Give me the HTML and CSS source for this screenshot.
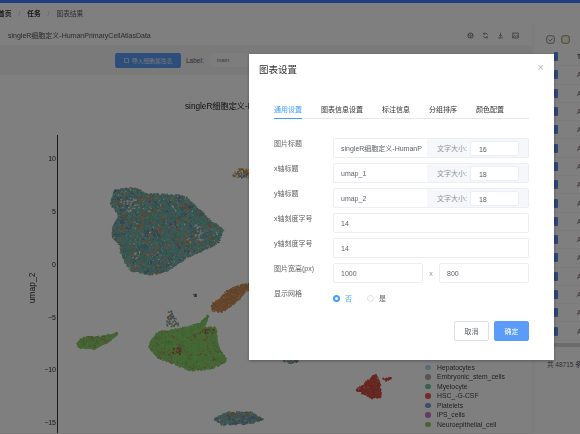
FILE: index.html
```html
<!DOCTYPE html>
<html lang="zh">
<head>
<meta charset="utf-8">
<title>图表结果</title>
<link rel="stylesheet" href="styles.css">
</head>
<body>
<div class="app">
  <div class="topbar"></div>
  <nav class="crumbs"><b>首页</b><i>/</i><b>任务</b><i>/</i><span>图表结果</span></nav>
  <div class="work">
    <section class="left">
      <header class="head">
        <span>singleR细胞定义-HumanPrimaryCellAtlasData</span>
        <div class="head-icons">
          <svg viewBox="0 0 10 10"><circle cx="5" cy="5" r="3.4" fill="none" stroke-width="2" stroke-dasharray="1.4 .7"/><circle cx="5" cy="5" r="1" fill="none"/></svg>
          <svg viewBox="0 0 10 10"><path d="M8 4A3.2 3.2 0 0 0 2.4 3M2 6a3.2 3.2 0 0 0 5.600 1M2.400 1v2h2M7.600 9V7h-2"/></svg>
          <svg viewBox="0 0 10 10"><path d="M5 1v5.500M3 4.500l2 2 2-2M1.500 8.500h7"/></svg>
          <svg viewBox="0 0 10 10"><path d="M1 1.500h8v7H1zM1 7l2.500-2 2 1.500L7 5l2 1.500"/></svg>
        </div>
      </header>
      <div class="toolbar">
        <button class="import"><span class="doc"></span>导入细胞属性表</button>
        <span class="lab">Label:</span>
        <span class="select">main</span>
      </div>
      <div class="plot">
        <h2 class="plot-title">singleR细胞定义-HumanPrimaryCellAtlasData</h2>
        <canvas id="scatter" width="580" height="434"></canvas>
        <div class="axis"></div>
        <span class="tick t1">10</span><span class="tick t2">5</span><span class="tick t3">0</span>
        <span class="tick t4">−5</span><span class="tick t5">−10</span><span class="tick t6">−15</span>
        <span class="ylab">umap_2</span>
        <ul class="legend">
          <li><i class="c1"></i>Hepatocytes</li>
          <li><i class="c2"></i>Embryonic_stem_cells</li>
          <li><i class="c3"></i>Myelocyte</li>
          <li><i class="c4"></i>HSC_-G-CSF</li>
          <li><i class="c5"></i>Platelets</li>
          <li><i class="c6"></i>iPS_cells</li>
          <li><i class="c7"></i>Neuroepithelial_cell</li>
        </ul>
      </div>
      <div class="plot-foot"></div>
    </section>
    <aside class="side">
      <div class="side-icons">
        <svg viewBox="0 0 12 12"><rect x="1" y="1" width="10" height="10" rx="2.500" fill="none"/><path d="M3.500 6l2 2 3-3.500" fill="none"/></svg>
        <svg viewBox="0 0 12 12"><rect class="note" x="1" y="1" width="10" height="10" rx="2.500"/></svg>
      </div>
      <div class="table">
        <div class="row head-row"><em></em><span>T</span></div>
        <div class="row"><em></em><span>A</span></div><div class="row"><em></em><span>A</span></div>
        <div class="row"><em></em><span>A</span></div><div class="row"><em></em><span>A</span></div>
        <div class="row"><em></em><span>A</span></div><div class="row"><em></em><span>A</span></div>
        <div class="row"><em></em><span>A</span></div><div class="row"><em></em><span>A</span></div>
        <div class="row"><em></em><span>A</span></div><div class="row"><em></em><span>A</span></div>
        <div class="row"><em></em><span>A</span></div><div class="row"><em></em><span>A</span></div>
        <div class="row"><em></em><span>A</span></div><div class="row"><em></em><span>A</span></div>
        <div class="row"><em></em><span>A</span></div><div class="row"><em></em><span>A</span></div>
      </div>
      <div class="scrollbar"></div>
      <div class="total">共 48715 条</div>
    </aside>
  </div>
  <div class="mask"></div>
  <div class="modal">
    <div class="modal-head"><span>图表设置</span><span class="close">×</span></div>
    <div class="tabs">
      <span class="active">通用设置</span><span>图表信息设置</span><span>标注信息</span><span>分组排序</span><span>颜色配置</span>
    </div>
    <form class="form">
      <div class="frow"><label>图片标题</label><div class="group"><span class="val">singleR细胞定义-HumanP</span><div class="addon"><span>文字大小:</span><span class="mini">16</span></div></div></div>
      <div class="frow"><label>x轴标题</label><div class="group"><span class="val">umap_1</span><div class="addon"><span>文字大小:</span><span class="mini">18</span></div></div></div>
      <div class="frow"><label>y轴标题</label><div class="group"><span class="val">umap_2</span><div class="addon"><span>文字大小:</span><span class="mini">18</span></div></div></div>
      <div class="frow"><label>x轴刻度字号</label><div class="group"><span class="val">14</span></div></div>
      <div class="frow"><label>y轴刻度字号</label><div class="group"><span class="val">14</span></div></div>
      <div class="frow"><label>图片宽高(px)</label><div class="pair"><div class="group"><span class="val">1000</span></div><span class="times">x</span><div class="group"><span class="val">800</span></div></div></div>
      <div class="frow radios"><label>显示网格</label><div class="radio-set"><span class="radio on"></span><span class="rtext on-text">否</span><span class="radio"></span><span class="rtext">是</span></div></div>
    </form>
    <div class="actions"><button class="cancel">取消</button><button class="ok">确定</button></div>
  </div>
</div>
<script src="app.js"></script>
</body>
</html>
```
FILE: styles.css
```css
* { box-sizing: border-box; }
html, body { margin: 0; padding: 0; width: 580px; height: 434px; overflow: hidden; background: #fff; }
body { font-family: "Liberation Sans", "Noto Sans CJK SC", sans-serif; color: #303133; }
.app { position: relative; width: 580px; height: 434px; overflow: hidden; filter: blur(.35px); }
.topbar { height: 3px; background: #3f7cff; }
.crumbs { height: 20px; display: flex; align-items: center; gap: 7px; margin-left: -2px; font-size: 6.700px; color: #606266; }
.crumbs b { font-weight: 700; color: #303133; }
.crumbs i { font-style: normal; color: #c0c4cc; }
.work { display: flex; height: 411px; }
.left { width: 532px; flex: none; display: flex; flex-direction: column; }
.head { height: 22px; display: flex; align-items: center; justify-content: space-between; padding: 2px 13px 0 8px; font-size: 7px; color: #555; background: #fefefe; }
.head-icons { display: flex; gap: 8px; }
.head-icons svg { width: 7px; height: 7px; stroke: #666; fill: none; stroke-width: 1; }
.toolbar { height: 30px; background: #f4f4f5; display: flex; align-items: center; padding: 0 0 0 115px; font-size: 6.500px; }
.import { width: 66px; height: 15px; padding: 0; border: 0; border-radius: 2px; background: #5b9cf5; color: #e8eefa; font: 5.800px "Liberation Sans", "Noto Sans CJK SC", sans-serif; display: flex; align-items: center; justify-content: center; gap: 3px; }
.doc { width: 5px; height: 5px; border: 1px solid #bcd4f5; }
.lab { margin-left: 5px; color: #606266; }
.select { margin-left: 6px; width: 50px; height: 14px; padding-left: 7px; line-height: 14px; background: #fbfbfb; font-size: 5.800px; color: #777; border-radius: 2px; }
.plot { position: relative; flex: 1; background: #fff; }
.plot-foot { height: 1px; background: #f0f0f0; }
.plot-title { position: absolute; left: 185px; top: 26px; margin: 0; font-size: 8.200px; line-height: 12px; font-weight: 400; color: #222; white-space: nowrap; }
#scatter { position: absolute; left: 0; top: -75px; width: 580px; height: 434px; }
.axis { position: absolute; left: 57px; top: 60px; bottom: 0; width: 1px; background: #333; }
.tick { position: absolute; right: 476px; font-size: 7px; line-height: 8px; color: #333; }
.t1 { top: 80px; } .t2 { top: 133px; } .t3 { top: 186px; } .t4 { top: 239px; } .t5 { top: 291px; } .t6 { top: 344px; }
.ylab { position: absolute; left: 32px; top: 213px; font-size: 8.500px; line-height: 10px; color: #333; transform: translate(-50%, -50%) rotate(-90deg); }
.legend { position: absolute; left: 425px; top: 288px; margin: 0; padding: 0; list-style: none; font-size: 6.800px; color: #444; }
.legend li { height: 9.450px; line-height: 9.450px; display: flex; align-items: center; gap: 6.500px; white-space: nowrap; }
.legend i { width: 5.500px; height: 5.500px; border-radius: 50%; }
.c1 { background: #a8dcec; } .c2 { background: #aaa; } .c3 { background: #6cc4a6; }
.c4 { background: #e85050; } .c5 { background: #7c9cd0; } .c6 { background: #c878c0; } .c7 { background: #9cc460; }
.side { flex: 1; position: relative; display: flex; flex-direction: column; background: #fff; border-left: 3px solid #f8f8f8; }
.side-icons { height: 25px; flex: none; display: flex; align-items: center; gap: 6px; padding: 7px 0 0 11px; }
.side-icons svg { width: 9px; height: 9px; stroke: #606266; stroke-width: 1; }
.side-icons .note { fill: #fbf5d8; }
.table { height: 295px; flex: none; overflow: hidden; }
.row { height: 18.300px; display: flex; align-items: center; padding-left: 19px; gap: 19px; border-bottom: 1px solid #f4f5f8; font-size: 6.500px; color: #606266; white-space: nowrap; }
.row em { width: 4px; height: 9px; background: #5b8ee8; border-radius: 1px; flex: none; }
.head-row { font-weight: 700; }
.scrollbar { height: 4px; flex: none; background: #d8d8d8; }
.total { padding: 12px 0 0 12px; font-size: 6.500px; color: #606266; white-space: nowrap; }
.mask { position: absolute; inset: 0; background: rgba(0, 0, 0, .5); }
.modal { position: absolute; left: 249px; top: 54px; width: 305px; height: 306px; background: #fff; box-shadow: 0 1px 3px rgba(0, 0, 0, .3); padding: 0 25px; color: #606266; }
.modal-head { height: 30px; margin: 0 -15px; display: flex; align-items: center; justify-content: space-between; font-size: 9.500px; color: #303133; }
.close { font-size: 11px; color: #b0b3b8; margin-right: 0; margin-top: -4px; }
.tabs { margin-top: 19px; height: 16px; display: flex; gap: 19px; border-bottom: 1px solid #e4e7ed; font-size: 7px; color: #303133; }
.tabs span { height: 16px; line-height: 14px; white-space: nowrap; }
.tabs .active { color: #409eff; border-bottom: 1px solid #409eff; }
.form { margin-top: 19px; display: flex; flex-direction: column; gap: 5px; }
.frow { display: flex; height: 20px; }
.frow label { width: 59px; flex: none; font-size: 7px; line-height: 12px; color: #606266; white-space: nowrap; }
.group { flex: 1; min-width: 0; height: 20px; display: flex; border: 1px solid #ebeef5; border-radius: 2px; overflow: hidden; font-size: 7px; line-height: 19px; }
.val { flex: 1; min-width: 0; padding-left: 7px; white-space: nowrap; overflow: hidden; }
.addon { width: 101px; flex: none; background: #f5f7fa; display: flex; align-items: center; padding-left: 10px; color: #909399; white-space: nowrap; }
.mini { width: 49px; height: 15px; margin-left: 3px; padding-left: 8px; line-height: 15px; background: #fff; border: 1px solid #ebeef5; border-radius: 2px; color: #606266; }
.pair { flex: 1; display: flex; align-items: center; }
.times { width: 16px; text-align: center; font-size: 7px; color: #909399; }
.radio-set { display: flex; align-items: center; height: 20px; font-size: 7px; }
.radio { width: 7px; height: 7px; border-radius: 50%; border: 1px solid #dcdfe6; background: #fff; }
.radio.on { border: 2px solid #409eff; background: #fff; }
.rtext { margin-left: 5px; margin-right: 15px; color: #606266; }
.on-text { color: #409eff; }
.actions { display: flex; justify-content: flex-end; gap: 5px; margin-top: 13px; }
.actions button { width: 35px; height: 20px; padding: 0; border-radius: 2px; font: 7px "Liberation Sans", "Noto Sans CJK SC", sans-serif; }
.cancel { background: #fff; border: 1px solid #dcdfe6; color: #606266; }
.ok { background: #5a9cf8; border: 1px solid #5a9cf8; color: #fff; }
```
FILE: app.js
```js
(function () {
  var c = document.getElementById('scatter').getContext('2d');
  var seed = 12345;
  function r() { seed = (seed * 16807) % 2147483647; return seed / 2147483647; }
  var T = '#6ab8ac', T2 = '#80aca6', T3 = '#5aa89c', O = '#c4946a', B = '#5c80b4', G = '#909a9a', W = '#e8e8e8';
  var GR = '#88d06c', GR2 = '#7cc464', O2 = '#cc8a54', O3 = '#b88458', DK = '#806048';
  var mix = [T, T, T, T, T2, T2, T3, T3, O, O3, B, G];
  var grn = [GR, GR, GR, GR, GR, GR2, GR2, GR, GR, O3];
  var ora = [O2, O2, O2, O2, O2, O, O3];
  var red = ['#cc4a42', '#cc4a42', '#cc4a42', '#cc4a42', '#cc4a42', '#cc4a42', '#d07048'];
  var blu = [B, T, O3, T2, T2, G];
  var tan = ['#d8bc50', '#d8bc50', B, O3];
  var pale = [W, W, G];
  function z5(p) { return p.map(function (q) { return [q[0] / 3, 130 + q[1] / 3]; }); }
  function z9(p) { return p.map(function (q) { return [200 + q[0] / 3, 340 + q[1] / 3]; }); }
  var blobs = [
    [z5([[340,178],[400,172],[440,190],[470,190],[550,195],[600,240],[625,265],[670,298],[650,340],[560,380],[500,420],[450,433],[390,420],[360,370],[360,345],[335,320],[335,290],[355,255],[330,220]]), mix, 11000],
    [z5([[445,640],[470,605],[560,590],[600,575],[625,552],[610,590],[645,590],[650,640],[678,690],[640,712],[570,720],[520,700],[470,680],[445,650]]), grn, 6500],
    [z5([[230,640],[245,620],[300,618],[355,607],[320,635],[280,655],[235,652]]), grn, 1000],
    [z5([[630,525],[660,500],[680,480],[720,462],[750,460],[750,470],[700,520],[660,545],[635,540]]), ora, 900],
    [z5([[495,590],[505,540],[515,540],[535,585]]), blu, 70],
    [z5([[580,490],[592,497],[585,500]]), [DK], 8],
    [z9([[40,235],[80,215],[150,215],[190,237],[150,248],[60,252]]), blu, 900],
    [z9([[465,148],[495,125],[525,100],[540,130],[540,170],[510,172]]), red, 650],
    [z9([[545,115],[575,110],[560,122]]), red, 25],
    [z5([[690,135],[720,112],[750,120],[750,140],[710,140]]), tan, 100],
    [z9([[240,60],[300,60],[270,68]]), blu, 40],
    [z5([[360,205],[400,200],[415,230],[380,245],[365,235]]), pale, 50],
    [z5([[580,280],[610,290],[610,330],[585,330]]), pale, 35],
    [z5([[390,360],[420,360],[415,385],[395,385]]), pale, 15],
    [z5([[515,650],[545,650],[545,670],[515,670]]), [DK, O2, O2], 35],
    [z5([[610,595],[640,595],[640,610],[610,610]]), [O2, DK], 20]
  ];
  var cells = {};
  function cell(x, y, list) {
    var k = Math.floor(x / 4) + '_' + Math.floor(y / 4);
    if (!(k in cells)) cells[k] = r();
    return list[Math.floor(cells[k] * list.length)];
  }
  function inside(p, x, y) {
    var o = false;
    for (var i = 0, j = p.length - 1; i < p.length; j = i++) {
      if ((p[i][1] > y) !== (p[j][1] > y) && x < (p[j][0] - p[i][0]) * (y - p[i][1]) / (p[j][1] - p[i][1]) + p[i][0]) o = !o;
    }
    return o;
  }
  blobs.forEach(function (b) {
    var xs = b[0].map(function (q) { return q[0]; }), ys = b[0].map(function (q) { return q[1]; });
    var x0 = Math.min.apply(null, xs), x1 = Math.max.apply(null, xs), y0 = Math.min.apply(null, ys), y1 = Math.max.apply(null, ys);
    for (var n = 0, t = 0; n < b[2] && t < b[2] * 30; t++) {
      var x = x0 + r() * (x1 - x0), y = y0 + r() * (y1 - y0);
      if (!inside(b[0], x, y)) continue;
      n++;
      c.fillStyle = r() < 0.4 ? cell(x, y, b[1]) : b[1][Math.floor(r() * b[1].length)];
      c.fillRect(x + (r() - .5) * 1.5, y + (r() - .5) * 1.5, 1.4, 1.4);
    }
  });
})();
```
